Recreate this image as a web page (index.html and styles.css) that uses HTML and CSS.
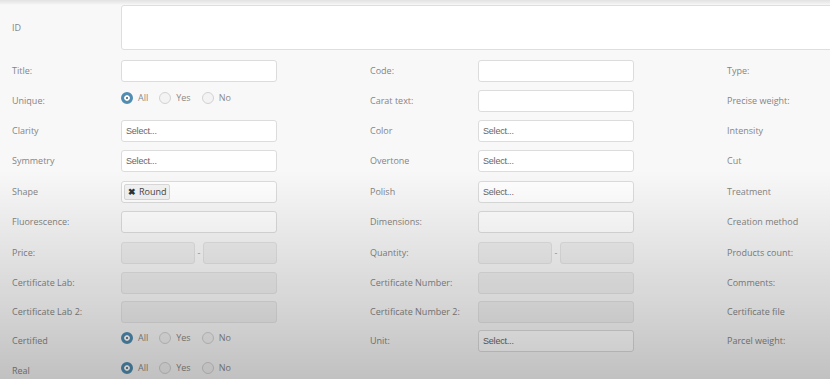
FILE: index.html
```html
<!DOCTYPE html>
<html lang="en">
<head>
  <meta charset="UTF-8">
  <title>Products filter</title>
  <link rel="stylesheet" href="styles.css">
</head>
<body>
  <form class="filter">
    <div class="id-row">
      <label class="lbl">ID</label>
      <textarea class="ids"></textarea>
    </div>

    <div class="grid">
      <label class="lbl">Title:</label>
      <input class="field" type="text">
      <span></span>
      <label class="lbl">Code:</label>
      <input class="field" type="text">
      <span></span>
      <label class="lbl">Type:</label>

      <label class="lbl">Unique:</label>
      <div class="radios">
        <span class="radio on"></span><span class="opt">All</span>
        <span class="radio"></span><span class="opt">Yes</span>
        <span class="radio"></span><span class="opt">No</span>
      </div>
      <span></span>
      <label class="lbl">Carat text:</label>
      <input class="field" type="text">
      <span></span>
      <label class="lbl">Precise weight:</label>

      <label class="lbl">Clarity</label>
      <div class="field select">Select...</div>
      <span></span>
      <label class="lbl">Color</label>
      <div class="field select">Select...</div>
      <span></span>
      <label class="lbl">Intensity</label>

      <label class="lbl">Symmetry</label>
      <div class="field select">Select...</div>
      <span></span>
      <label class="lbl">Overtone</label>
      <div class="field select">Select...</div>
      <span></span>
      <label class="lbl">Cut</label>

      <label class="lbl">Shape</label>
      <div class="field tags"><span class="tag"><b>✖</b>Round</span></div>
      <span></span>
      <label class="lbl">Polish</label>
      <div class="field select">Select...</div>
      <span></span>
      <label class="lbl">Treatment</label>

      <label class="lbl">Fluorescence:</label>
      <input class="field" type="text">
      <span></span>
      <label class="lbl">Dimensions:</label>
      <input class="field" type="text">
      <span></span>
      <label class="lbl">Creation method</label>

      <label class="lbl">Price:</label>
      <div class="range">
        <input class="field off" type="text" disabled><span class="dash">-</span><input class="field off" type="text" disabled>
      </div>
      <span></span>
      <label class="lbl">Quantity:</label>
      <div class="range">
        <input class="field off" type="text" disabled><span class="dash">-</span><input class="field off" type="text" disabled>
      </div>
      <span></span>
      <label class="lbl">Products count:</label>

      <label class="lbl">Certificate Lab:</label>
      <input class="field off" type="text" disabled>
      <span></span>
      <label class="lbl">Certificate Number:</label>
      <input class="field off" type="text" disabled>
      <span></span>
      <label class="lbl">Comments:</label>

      <label class="lbl">Certificate Lab 2:</label>
      <input class="field off" type="text" disabled>
      <span></span>
      <label class="lbl">Certificate Number 2:</label>
      <input class="field off" type="text" disabled>
      <span></span>
      <label class="lbl">Certificate file</label>

      <label class="lbl">Certified</label>
      <div class="radios">
        <span class="radio on"></span><span class="opt">All</span>
        <span class="radio"></span><span class="opt">Yes</span>
        <span class="radio"></span><span class="opt">No</span>
      </div>
      <span></span>
      <label class="lbl">Unit:</label>
      <div class="field select">Select...</div>
      <span></span>
      <label class="lbl">Parcel weight:</label>

      <label class="lbl">Real</label>
      <div class="radios">
        <span class="radio on"></span><span class="opt">All</span>
        <span class="radio"></span><span class="opt">Yes</span>
        <span class="radio"></span><span class="opt">No</span>
      </div>
      <span></span>
      <span></span>
      <span></span>
      <span></span>
      <span></span>
    </div>
  </form>

  <div class="shade"></div>
</body>
</html>
```

FILE: styles.css
```css
* {
  box-sizing: border-box;
}

body {
  margin: 0;
  padding: 5px 0 0 12px;
  font-family: "Open Sans", sans-serif;
  font-size: 9px;
  color: #858585;
  background: linear-gradient(#e2e2e2 0, #eeeeee 3px, #f8f8f8 5px, #f8f8f8 100%);
  overflow: hidden;
  height: 379px;
}

.id-row {
  display: flex;
  align-items: center;
  height: 45px;
  margin-bottom: 10px;
}

.id-row .lbl {
  width: 109px;
  margin-top: 1px;
}

.ids {
  flex: 1;
  height: 45px;
  margin-right: -10px;
  border: 1px solid #dedede;
  border-radius: 3px;
  background: #fff;
  resize: none;
}

.grid {
  display: grid;
  grid-template-columns: 109px 156px 93px 108px 156px 93px 1fr;
  grid-template-rows: 22px 22px 22px 22px 23px 22px 23px 22px 20px 22px 22px;
  row-gap: 8px;
  align-items: center;
}

.lbl {
  white-space: nowrap;
  line-height: 22px;
}

.field {
  width: 156px;
  height: 22px;
  margin: 0;
  border: 1px solid #dcdcdc;
  border-radius: 3px;
  background: #fff;
  font-family: "Liberation Sans", Arial, sans-serif;
  font-size: 9px;
}

.field.off {
  background: #efefef;
  border-color: #e2e2e2;
}

.select {
  display: flex;
  align-items: center;
  padding-left: 4px;
  color: #666;
  letter-spacing: -0.2px;
}

.tags {
  display: flex;
  align-items: center;
  padding-left: 2px;
}

.tag {
  display: flex;
  align-items: center;
  gap: 3px;
  height: 16px;
  padding: 0 2px 0 3px;
  border: 1px solid #dadada;
  border-radius: 2px;
  background: #f4f4f4;
  color: #444;
  font-family: "Open Sans", sans-serif;
  font-size: 9px;
}

.tag b {
  font-size: 9px;
  color: #333;
}

.range {
  display: flex;
  align-items: center;
  width: 156px;
}

.range .field {
  width: 74px;
}

.dash {
  width: 8px;
  text-align: center;
  color: #999;
}

.radios {
  display: flex;
  align-items: center;
  height: 22px;
  padding-bottom: 7px;
}

.radio {
  width: 12px;
  height: 12px;
  border-radius: 50%;
  border: 1px solid #d2d2d2;
  background: #f3f3f3;
}

.radio.on {
  border: 3px solid #4f8db3;
  background: #3a5a6e;
  box-shadow: inset 0 0 0 2px #fff;
}

.opt {
  margin: 0 11px 0 5px;
  color: #8a8a8a;
}

.shade {
  position: fixed;
  left: 0;
  top: 0;
  width: 100%;
  height: 100%;
  pointer-events: none;
  background: linear-gradient(rgba(0, 0, 0, 0) 0, rgba(0, 0, 0, 0) 170px, rgba(0, 0, 0, 0.1) 270px, rgba(0, 0, 0, 0.22) 100%);
}
```
